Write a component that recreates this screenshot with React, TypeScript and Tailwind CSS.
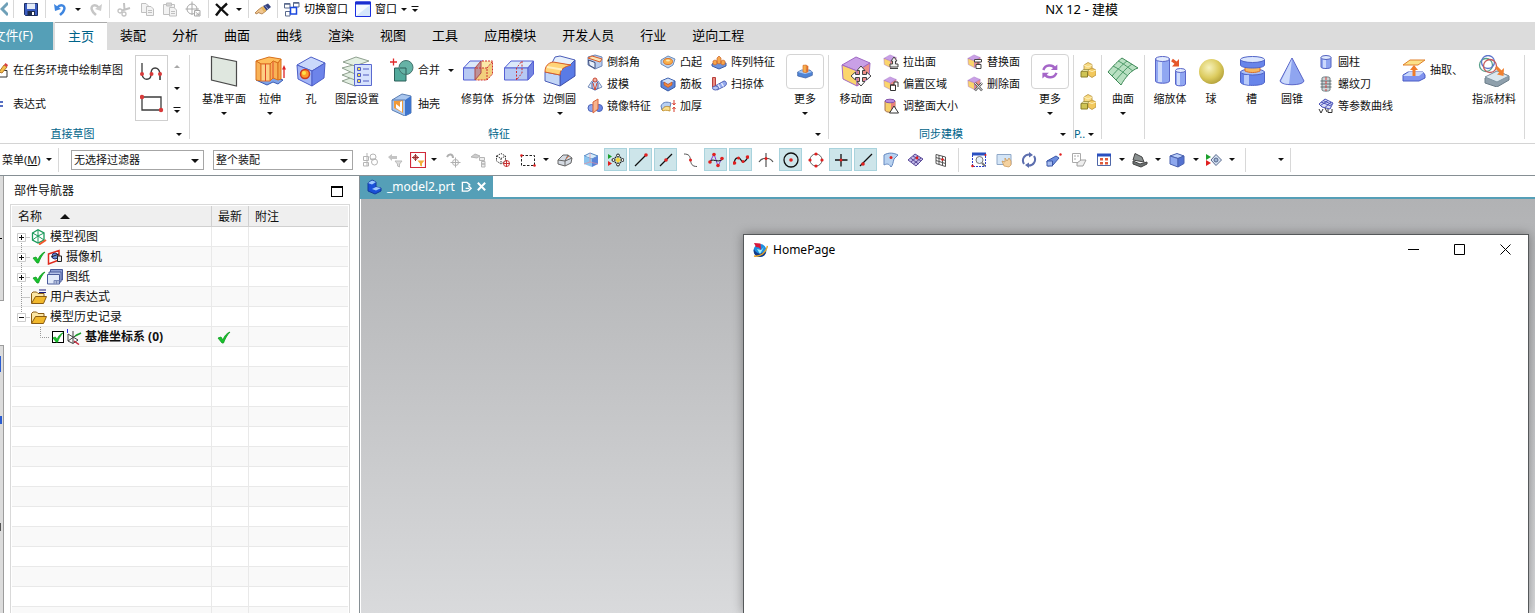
import type { ReactNode } from "react"
import clsx from "clsx"

/* ---------- small drawing helpers ---------- */

interface IcoProps {
    box?: number
    size?: number
    children: ReactNode
}

function Ico({ box = 16, size = box, children }: IcoProps) {
    return (
        <svg width={size} height={size} viewBox={`0 0 ${box} ${box}`} fill="none" className="shrink-0" aria-hidden="true">
            {children}
        </svg>
    )
}

function Caret({ className, up }: { className?: string; up?: boolean }) {
    return (
        <span className={clsx("flex shrink-0 items-center justify-center", className)}>
            <svg width="6" height="3" viewBox="0 0 6 3" aria-hidden="true">
                {up ? <path d="M3 0L6 3H0z" fill="#a8a8a8" /> : <path d="M0 0H6L3 3z" fill="#111" />}
            </svg>
        </span>
    )
}

function MoreCaret({ className }: { className?: string }) {
    return (
        <span className={clsx("flex shrink-0 items-center justify-center", className)}>
            <svg width="8" height="6" viewBox="0 0 8 6" aria-hidden="true">
                <path d="M0.500 0.500H7.500" stroke="#111" />
                <path d="M1 3H7L4 6z" fill="#111" />
            </svg>
        </span>
    )
}

function Sep({ className }: { className?: string }) {
    return <span className={clsx("w-px shrink-0 bg-[#d8d8d8]", className)} />
}

function Cube({ top, left, right, stroke }: { top: string; left: string; right: string; stroke: string }) {
    return (
        <g stroke={stroke} strokeWidth="1" strokeLinejoin="round">
            <path d="M2 10L16 2L30 8L17 16z" fill={top} />
            <path d="M2 10L17 16V31L3 24z" fill={left} />
            <path d="M17 16L30 8L29 23L17 31z" fill={right} />
        </g>
    )
}

const syncCube = <Cube top="#c9a0e6" left="#fbd56c" right="#ef8f86" stroke="#a06ac4" />
const tinySync = <g transform="scale(.44)">{syncCube}</g>

/* ---------- quick access icons ---------- */

const quick = {
    logo: <path d="M8 2L2 8L8 14" stroke="#6fa0b8" strokeWidth="3" />,
    save: (
        <>
            <path d="M1.500 2.500H14.500V14.500H2.500L1.500 13.500z" fill="#3a5cc0" stroke="#1d2f66" />
            <path d="M4 2.500H12V8H4z" fill="#e4ecf8" />
            <path d="M4.500 10H12V14.500H4.500z" fill="#1f2c4c" />
            <path d="M9 11H11V14H9z" fill="#fff" />
        </>
    ),
    undo: (
        <>
            <path d="M5 7C9 2 14 5 12 9C11 12 9 13 8 14" stroke="#3f86e0" strokeWidth="2.500" />
            <path d="M2 3L3 10L9 8z" fill="#3f86e0" />
        </>
    ),
    redo: (
        <>
            <path d="M11 7C7 2 2 5 4 9C5 12 7 13 8 14" stroke="#c6c6c6" strokeWidth="2.500" />
            <path d="M14 3L13 10L7 8z" fill="#cdcdcd" />
        </>
    ),
    cut: (
        <g stroke="#c3c3c3" strokeWidth="1.300">
            <path d="M8 2L8.500 9M14 7L6 9.500" strokeWidth="2" />
            <circle cx="4" cy="10" r="2" />
            <circle cx="8" cy="13" r="2" />
        </g>
    ),
    copy: (
        <g stroke="#c0c0c0" fill="#f3f3f3">
            <path d="M2.500 2.500H7L9.500 5V11.500H2.500z" />
            <path d="M7.500 5.500H12L14.500 8V14.500H7.500z" />
            <path d="M9 9.500H13M9 11.500H13" />
        </g>
    ),
    paste: (
        <g stroke="#c0c0c0" fill="#f3f3f3">
            <path d="M1.500 3.500H12.500V13.500H1.500z" />
            <path d="M4.500 2H9.500V5H4.500z" fill="#d5d5d5" />
            <path d="M7.500 6.500H12L14.500 9V15H7.500z" />
            <path d="M9 10.500H13M9 12.500H13" />
        </g>
    ),
    target: (
        <g stroke="#a8a8a8">
            <circle cx="7" cy="8" r="5" />
            <path d="M7 .5V14M.5 8H14" />
            <path d="M9.500 9.500H15V15H9.500z" fill="#fff" />
            <path d="M10.500 11L14 14M14 11.500V14H11" />
        </g>
    ),
    del: <path d="M2 3L14 14.500M13 2.500C9 6 5 10 2 14.500" stroke="#111" strokeWidth="2.400" />,
    brush: (
        <>
            <path d="M0 12L3 9L7 6L11 10L7 13L3 11.500L2 13z" fill="#f0c690" stroke="#a06a30" strokeWidth=".7" />
            <path d="M8 5L13 2.500L16 6L11 10z" fill="#35427c" />
            <path d="M6 7L8 5L11.500 9.500L9 11z" fill="#e6b45c" />
            <path d="M10 4.500L13 8" stroke="#8fa0dc" />
        </>
    ),
    windows: (
        <>
            <path d="M.5 2.500H6V7H.5zM9.500 1.500H15V6H9.500zM1.500 10.500H6V15H1.500z" fill="#fff" stroke="#5a6a8c" />
            <path d="M.5 3H6M9.500 2H15" stroke="#5a6a8c" strokeWidth="1.500" />
            <path d="M6.500 6.500H12.500V13H6.500z" fill="#fff" stroke="#1a48e0" strokeWidth="1.500" />
        </>
    ),
    window: (
        <>
            <path d="M.5 1H15.500V15.500H.5z" fill="#d5e7fb" stroke="#1a2ee0" />
            <path d="M1 4L15 4L1 15z" fill="#f5faff" />
            <path d="M.5 2H15.500" stroke="#1a2ed0" strokeWidth="3" />
        </>
    ),
}

function QuickButton({ icon, label, className }: { icon: ReactNode; label: string; className?: string }) {
    return (
        <button type="button" aria-label={label} className={clsx("shrink-0", className)}>
            <Ico>{icon}</Ico>
        </button>
    )
}

function QuickBar() {
    return (
        <header className="flex h-[22px] shrink-0 items-center bg-white pb-1 text-[11px] leading-4">
            <span className="w-2 overflow-hidden"><Ico>{quick.logo}</Ico></span>
            <Sep className="ml-[5px] h-[18px]" />
            <QuickButton icon={quick.save} label="保存" className="ml-[9px]" />
            <Sep className="ml-1.5 h-[18px]" />
            <QuickButton icon={quick.undo} label="撤消" className="ml-1.5" />
            <Caret className="w-5" />
            <QuickButton icon={quick.redo} label="重做" />
            <Sep className="ml-[5px] h-[18px]" />
            <div className="ml-1.5 flex gap-[7px]">
                <QuickButton icon={quick.cut} label="剪切" />
                <QuickButton icon={quick.copy} label="复制" />
                <QuickButton icon={quick.paste} label="粘贴" />
                <QuickButton icon={quick.target} label="重复命令" />
            </div>
            <Sep className="ml-[7px] h-[18px]" />
            <QuickButton icon={quick.del} label="删除" className="ml-[5px]" />
            <Caret className="w-[18px]" />
            <Sep className="h-[18px]" />
            <QuickButton icon={quick.brush} label="格式刷" className="ml-1.5" />
            <Sep className="ml-1.5 h-[18px]" />
            <button type="button" className="ml-1.5 flex items-center gap-1">
                <Ico>{quick.windows}</Ico>切换窗口
            </button>
            <button type="button" className="ml-[7px] flex items-center gap-1">
                <Ico>{quick.window}</Ico>窗口
                <Caret className="w-1.5" />
            </button>
            <MoreCaret className="ml-0.5 w-3" />
            <h1 className="ml-auto mr-[417px] text-[13px]">NX 12 - 建模</h1>
        </header>
    )
}

/* ---------- ribbon tabs ---------- */

const tabs = ["主页", "装配", "分析", "曲面", "曲线", "渲染", "视图", "工具", "应用模块", "开发人员", "行业", "逆向工程"]

function TabRow() {
    return (
        <nav className="flex h-7 shrink-0 bg-[#dcdcdc] text-[13px] leading-5">
            <button type="button" className="flex w-[53px] shrink-0 items-center justify-end overflow-hidden whitespace-nowrap bg-[#559fb7] pb-0.5 pr-5 text-white">
                文件(F)
            </button>
            {tabs.map((tab, i) => (
                <button
                    type="button"
                    key={tab}
                    className={clsx(
                        "shrink-0 px-[13px] pb-0.5",
                        i === 0 && "ml-0.5 border-t border-[#aaa] bg-white text-[#00648a]"
                    )}
                >
                    {tab}
                </button>
            ))}
        </nav>
    )
}

/* ---------- ribbon icons ---------- */

const big = {
    plane: <path d="M3.500 1.500L28.500 6.500V31L3.500 25z" fill="#dfe7df" stroke="#4a4a4a" strokeWidth="1.200" />,
    extrude: (
        <>
            <path d="M2 25L16 20L29 25L24 29L19 27L13 30z" fill="#7ea2e6" stroke="#3c5cb4" />
            <path d="M2 6L15 2L27 4L24 8L19 6L16 9L7 9z" fill="#ffbe5c" stroke="#d8701c" />
            <path d="M2 6L7 9V26L2 25zM16 9L19 6L24 8V25L19 23L16 26z" fill="#f8b256" stroke="#d8701c" />
            <path d="M7 9L16 9V26L7 26z" fill="#fdd083" stroke="#e0702c" />
            <path d="M24 8L27 4V24L24 25z" fill="#f6a848" stroke="#d8701c" />
            <path d="M11.500 9V26M19 7V23" stroke="#e04a2c" />
            <path d="M30 23V13" stroke="#d22" strokeWidth="1.300" />
            <path d="M28 14.500L30 10L32 14.500z" fill="#d22" />
        </>
    ),
    hole: (
        <>
            <Cube top="#c9d8fb" left="#a3b5f6" right="#6d84ea" stroke="#4d5fc8" />
            <circle cx="10" cy="19" r="4.500" fill="#ff9a28" stroke="#cc3a22" strokeWidth="1.500" />
            <circle cx="9" cy="18" r="2" fill="#ffe04a" />
        </>
    ),
    layers: (
        <>
            <g fill="#e3efe2" stroke="#8fa08f">
                <path d="M1 26L12 22L28 27L14 31z" />
                <path d="M1 20L12 16L28 20L14 25z" />
                <path d="M1 13L12 10L28 13L14 19z" />
                <path d="M2 7L15 2L28 6L14 11z" />
            </g>
            <path d="M13.500 9.500H30.500V30.500H13.500z" fill="#d6e2fd" stroke="#5a6ad0" />
            <g stroke="#505ac0">
                <path d="M16.500 12.500h3v3h-3zM16.500 18.500h3v3h-3zM16.500 24.500h3v3h-3z" fill="#f5dc50" />
                <path d="M22 14H28M22 20H28M22 26H28" />
            </g>
        </>
    ),
    unite: (
        <>
            <path d="M4.500 10H16V23H4.500z" fill="#52aa9c" stroke="#2b5f58" />
            <circle cx="16" cy="9.500" r="7" fill="#66b3a6" stroke="#44736d" />
            <path d="M10 10H16V16" stroke="#2b5f58" />
            <path d="M0 4H7M3.500 .5V7.500" stroke="#e02a2a" strokeWidth="1.300" />
        </>
    ),
    shell: (
        <>
            <path d="M2 8L12 2L21 4L21 21L15 24L2 18z" fill="#a9c6ee" stroke="#5c7fb4" />
            <path d="M15 8L21 4V21L15 24z" fill="#3e74cc" />
            <path d="M4 9L13 8V21L4 16z" fill="#f19a38" />
            <path d="M6 16V12L10 15V10L12 9V20z" fill="#fff" />
            <path d="M2 8L15 8" stroke="#5c7fb4" />
        </>
    ),
    trim: (
        <>
            <g stroke="#5560d4">
                <path d="M1.500 13L8 6H21L16 13z" fill="#dbe9fa" />
                <path d="M1.500 13H14V25H1.500z" fill="#b7c9f3" />
            </g>
            <path d="M14 12L20 6H30.500L25 13H14z" fill="#fbe9a8" />
            <path d="M14 13H25V25H14zM25 13L30.500 7V19L25 25z" fill="#f2cf7c" />
            <path d="M13 25V13L19 6V18z" fill="#bd9299" stroke="#b04848" />
            <path d="M20 6H30.500V19L25 25H14M25 25V13L30 7M14 13H25" stroke="#d03030" strokeDasharray="2 1" />
        </>
    ),
    split: (
        <>
            <g stroke="#5560d4">
                <path d="M1.500 13L8 6H30.500L25 13z" fill="#dbe9fa" />
                <path d="M1.500 13H25V25H1.500z" fill="#b7c9f3" />
                <path d="M25 13L30.500 6V19L25 25z" fill="#7486e2" />
            </g>
            <path d="M13.500 25V13L19 6V18z" stroke="#d03030" strokeDasharray="2 1.500" />
        </>
    ),
    blend: (
        <>
            <path d="M16 19C16 14 22 12 31 5V21L16 31z" fill="#5a7be6" stroke="#3c4ca8" />
            <path d="M1 17L16 20V31L1 26z" fill="#c3d6f6" stroke="#4a5cb8" />
            <path d="M11 2L16 1L31 5L26 10L8 8z" fill="#e7f0fb" stroke="#4a5cb8" />
            <path d="M1 17C1 11 4 8 9 7L27 10C20 12 16 14 16 20z" fill="#ffd477" stroke="#d85c28" />
            <path d="M3 12L18 14.500" stroke="#fff0c0" strokeWidth="2" />
        </>
    ),
    more: (
        <>
            <path d="M1 12L7 9H19L23 12V17L13 21L1 18z" fill="#4f84d6" stroke="#33569c" />
            <path d="M1 12L12 15L23 12L17 9.500H7z" fill="#a8c8f2" />
            <path d="M9 2L14 1.500V13L9 12z" fill="#f6b050" stroke="#d86a20" />
            <path d="M14 1.500L17 3V12L14 13z" fill="#e0702a" />
        </>
    ),
    moveFace: (
        <>
            {syncCube}
            <path
                d="M21 11L25 15.500H22.500V19.500H26.500V17L31 21L26.500 25V22.500H22.500V26.500H25L21 31L17 26.500H19.500V22.500H15.500V25L11 21L15.500 17V19.500H19.500V15.500H17z"
                fill="#fff"
                stroke="#444"
            />
        </>
    ),
    cycle: (
        <g transform="translate(-5 -5) scale(1.400)">
            <path d="M5 10C7 4 15 4 17 8M19 13C17 19 9 19 7 15" stroke="#a566c8" strokeWidth="2.600" />
            <path d="M13 10H20V4zM11 13H4V19z" fill="#a566c8" />
        </g>
    ),
    surface: (
        <>
            <path d="M1 17C7 10 11 6 15 3L31 13C24 15 18 23 14 30z" fill="#b9e0c2" stroke="#3f8a58" />
            <path d="M6 11C11 13 18 19 21 21M11 6C16 8 23 14 26 16M5 21C11 14 15 10 20 6M9 25C15 18 19 13 25 9" stroke="#4c9a68" />
        </>
    ),
    scale: (
        <>
            <g stroke="#5a66c8">
                <path d="M1.500 4V26C1.500 29 15.500 29 15.500 26V4z" fill="#90a7f2" />
                <path d="M4 5V27H8V6z" fill="#cfdcfc" stroke="none" />
                <ellipse cx="8.500" cy="4" rx="7" ry="2.500" fill="#e2ebfd" />
                <path d="M21.500 16V29C21.500 31.500 31.500 31.500 31.500 29V16z" fill="#90a7f2" />
                <path d="M23 17V30H26V17z" fill="#cfdcfc" stroke="none" />
                <ellipse cx="26.500" cy="15.500" rx="5" ry="2" fill="#e2ebfd" />
            </g>
            <path d="M18 5L22 8" stroke="#e5572a" strokeWidth="3" />
            <path d="M25 4V11.500H18z" fill="#e5572a" />
        </>
    ),
    cone: (
        <>
            <path d="M16 3L28 26C27 31 5 31 4 26z" fill="#8fa5f0" stroke="#5a66c8" />
            <path d="M16 4L13 29C9 29 6 28 5 26z" fill="#ccdafc" />
        </>
    ),
    groove: (
        <>
            <g stroke="#4f63c8">
                <path d="M4.500 17V27C4.500 31.500 28.500 31.500 28.500 27V17z" fill="#6885ea" />
                <ellipse cx="16.500" cy="17" rx="12" ry="3" fill="#a9bff7" />
                <path d="M9 10H24V16C20 18 13 18 9 16z" fill="#f7b860" stroke="#d8702c" />
                <path d="M4.500 5V10C4.500 14 28.500 14 28.500 10V5z" fill="#6885ea" />
                <ellipse cx="16.500" cy="4.500" rx="12" ry="3" fill="#dbe6fd" />
            </g>
            <path d="M8 20V29L13 30V20z" fill="#b9cbfa" />
        </>
    ),
    material: (
        <>
            <path d="M7 23L19 16L31 21V25L19 32L7 28z" fill="#8fa0ac" stroke="#6a7c88" />
            <path d="M7 22L19 16L31 21L19 27z" fill="#dbe7ee" stroke="#8095a2" />
            <circle cx="8" cy="10" r="6.500" stroke="#58a08a" strokeWidth="1.300" />
            <circle cx="10" cy="7" r="6.500" stroke="#5c74cc" strokeWidth="1.300" />
            <circle cx="12" cy="11" r="6.500" stroke="#c65a5a" strokeWidth="1.300" />
            <path d="M18 12L23 17" stroke="#f08030" strokeWidth="3" />
            <path d="M19 19.500L26 13L25.500 21z" fill="#f08030" />
        </>
    ),
    extract: (
        <>
            <path d="M1 17L6 14H21L23 17V20L17 23H1z" fill="#7f92ee" stroke="#4a5cc4" />
            <path d="M1 18L7 14H22L17 18z" fill="#cad9fb" />
            <path d="M1 7L8 2H23L16 7z" fill="#fbe188" stroke="#e0802c" />
            <path d="M12 18V11" stroke="#f07c28" strokeWidth="3" />
            <path d="M8 12L12 7L16 12z" fill="#f07c28" />
        </>
    ),
}

const ball = (
    <>
        <defs>
            <radialGradient id="ball" cx=".4" cy=".35" r=".7">
                <stop offset="0" stopColor="#f6f2bc" />
                <stop offset=".6" stopColor="#dccb5e" />
                <stop offset="1" stopColor="#b09e38" />
            </radialGradient>
        </defs>
        <circle cx="16.500" cy="16.500" r="12.500" fill="url(#ball)" />
    </>
)

const small = {
    chamfer: (
        <>
            <path d="M1 3L8 1L15 3V12L8 15L1 11z" fill="#b7cbed" stroke="#7088b8" />
            <path d="M1 4L13 8L15 5L5 2z" fill="#fbe3b4" stroke="#d85c28" />
            <path d="M1.500 6L8 8.500V14.500L2 11z" fill="#e8f0fb" stroke="#3c4c7c" />
        </>
    ),
    draft: (
        <>
            <path d="M1 11L5 5H11L15 11L8 14z" fill="#e6eef8" stroke="#7088b8" />
            <path d="M5 12V7L8 4L11 7V12L8 14z" fill="#c8d8f4" stroke="#4a62a8" />
            <path d="M8 14L6 7M8 14L10 7" stroke="#d84a30" />
            <circle cx="8" cy="4" r="2" fill="#f1b2a2" stroke="#c84a38" />
        </>
    ),
    mirror: (
        <>
            <circle cx="4.500" cy="10" r="3.500" fill="#8ea6ee" stroke="#4a62b8" />
            <circle cx="12" cy="10" r="3.500" fill="#6a86e6" stroke="#4a62b8" />
            <path d="M6 4L11 1V11L6 15z" fill="#f7b48e" stroke="#d8643c" />
        </>
    ),
    emboss: (
        <>
            <path d="M1 6L8 2L15 5L13 11L8 14L1 10z" fill="#bcd3ee" stroke="#6f8fbc" />
            <ellipse cx="8" cy="7.500" rx="4.500" ry="3" fill="#f8b04c" stroke="#d8742c" />
            <ellipse cx="8" cy="6.500" rx="2" ry="1" fill="#fde9b0" />
        </>
    ),
    rib: (
        <>
            <path d="M1 5L8 2L15 5V11L8 15L1 11z" fill="#5e86d8" stroke="#365aa8" />
            <path d="M2 5L8 2.500L14 5L8 8z" fill="#cfe0f8" />
            <path d="M4 6L8 8.500L12 6V9L8 11.500L4 9z" fill="#f28a3c" stroke="#c8501c" strokeWidth=".6" />
        </>
    ),
    thicken: (
        <>
            <path d="M1 8C3 3 8 4 11 5L10 9C7 8 4 8 2 12z" fill="#b8d0f2" stroke="#5c7cb8" />
            <path d="M2 12C4 8 7 8 10 9V13C7 12 4 12 3 13z" fill="#fbe08c" stroke="#c89a3c" />
            <path d="M14 2V6M14 14V10M12.500 5L14 7L15.500 5M12.500 11L14 9L15.500 11" stroke="#d83a2c" />
        </>
    ),
    pattern: (
        <>
            <path d="M1 10L5 8L15 9V12L8 15L1 12z" fill="#6c93dc" stroke="#3c5ca4" />
            <path d="M2 7L4 6L6 7V10L4 11L2 10zM6 4L8 2L10 4V9L8 10L6 9zM10 7L12 6L14 7V10L12 11L10 10z" fill="#f6a64c" stroke="#c8642c" strokeWidth=".7" />
        </>
    ),
    sweep: (
        <>
            <path d="M4 10L13 5C16 5 16 9 14 10L6 14z" fill="#93a9ee" stroke="#5262b4" />
            <path d="M7 8.500L9 12M10.500 7L12.500 10.500" stroke="#e6ecfc" strokeWidth="1.500" />
            <path d="M1.500 1.500H4.500V11H1.500z" fill="#e88a80" stroke="#b8403c" />
            <ellipse cx="4.500" cy="12" rx="3" ry="2" fill="#b8c8f4" stroke="#5262b4" />
        </>
    ),
    pull: (
        <>
            {tinySync}
            <path d="M11 3L14 7H12.500V10H15V13H7V10H9.500V7H8zM7 14.500H15" fill="#f0f0f0" stroke="#444" />
        </>
    ),
    offset: (
        <>
            {tinySync}
            <path d="M7.500 9H11V6H15V11M7.500 9V14.500H12.500V9z" fill="#fff" stroke="#333" />
        </>
    ),
    resize: (
        <>
            <path d="M2 3V12C2 15 12 15 12 12V3z" fill="#f6d068" stroke="#a8704c" />
            <path d="M8 4H12V13L8 14z" fill="#e88078" />
            <ellipse cx="7" cy="3" rx="5" ry="1.800" fill="#b88ade" stroke="#8656ac" />
            <path d="M11 8L15.500 15H6.500z" fill="#fff" stroke="#333" />
        </>
    ),
    replace: (
        <>
            {tinySync}
            <path d="M7.500 5.500H14.500V8H7.500zM9 10.500H14V14.500H9z" fill="#fff" stroke="#444" />
            <path d="M11 8V10" stroke="#444" />
        </>
    ),
    remove: (
        <>
            {tinySync}
            <path d="M8 7L15 14.500M15 7L8 14.500" stroke="#555" strokeWidth="2.500" />
            <path d="M8 7L15 14.500M15 7L8 14.500" stroke="#eee" />
        </>
    ),
    cylinder: (
        <>
            <path d="M3 3.500V13C3 15 13 15 13 13V3.500z" fill="#8ea4f0" stroke="#5262c0" />
            <path d="M5 4V13.500L8 14V4z" fill="#ccd9fc" />
            <ellipse cx="8" cy="3.500" rx="5" ry="2" fill="#e0e9fd" stroke="#5262c0" />
        </>
    ),
    thread: (
        <>
            <path d="M4 2C4 .5 12 .5 12 2V14C12 15.500 4 15.500 4 14z" fill="#ccd6d8" stroke="#6c7c80" />
            <path d="M2.500 5H13.500M2.500 8H13.500M2.500 11H13.500" stroke="#5c6c70" />
            <path d="M8 1V15" stroke="#d84040" strokeDasharray="3 1" />
        </>
    ),
    isoparam: (
        <>
            <path d="M1 6L7 1L15 5L12 11L4 9z" fill="#d8dcf6" stroke="#4a52b8" />
            <path d="M3 4L13 8M5 2.500L14 6.500M2.500 7.500L10 2.500M7 9.500L13 4" stroke="#4a52b8" />
            <path d="M1 11L3 15L5 11M10 11V14.500H14V11" stroke="#333" />
            <path d="M7 10L9 14" stroke="#333" />
        </>
    ),
    boxes: (
        <>
            <path d="M4 3L8 .5L12 2.500V8H4z" fill="#f8da80" stroke="#b8923c" strokeWidth=".8" />
            <path d="M8 8L12 6L16 8V13L12 15.500L8 13z" fill="#f2c85c" stroke="#b8923c" strokeWidth=".8" />
            <path d="M8 8L12 9.500L16 8M4 3L8 5L12 3" stroke="#fdf0bc" />
            <path d="M1 9.500H7.500V15H1z" fill="#cfc455" stroke="#8a7f28" />
            <path d="M1 9.500L3.500 7.500H9L7.500 9.500z" fill="#e8e0a0" stroke="#8a7f28" strokeWidth=".6" />
        </>
    ),
    pencil: (
        <>
            <path d="M1 8.500H15V15H1z" stroke="#333" />
            <path d="M7 10L12 3L15 5L10 11z" fill="#f4c04c" stroke="#b8782c" />
            <path d="M12 3L13.500 1L16 3L15 5z" fill="#d84040" />
        </>
    ),
    equal: <path d="M4 6H11M4 10H11" stroke="#1f3fae" strokeWidth="1.300" />,
}

const profileCurve = (
    <>
        <path d="M2 3V14C3 21 11 21 11 14C11 6 19 6 20 14V20" stroke="#3c3c3c" strokeWidth="1.300" />
        <path d="M20 12V20" stroke="#3c3c3c" />
        <g fill="#d83a3a">
            <circle cx="2" cy="14" r="2" />
            <circle cx="11.500" cy="14" r="2" />
            <circle cx="20" cy="14" r="2" />
        </g>
    </>
)

const rectangleCurve = (
    <>
        <path d="M2 5H21V18H2z" stroke="#3c3c3c" strokeWidth="1.300" />
        <circle cx="2" cy="5" r="2.200" fill="#d83a3a" />
        <circle cx="21" cy="18" r="2.200" fill="#d83a3a" />
    </>
)

/* ---------- ribbon building blocks ---------- */

interface BigButtonProps {
    icon: ReactNode
    label: string
    className: string
    menu?: boolean
}

function BigButton({ icon, label, className, menu }: BigButtonProps) {
    return (
        <button type="button" className={clsx("flex shrink-0 flex-col items-center whitespace-nowrap pt-1", className)}>
            <Ico box={32}>{icon}</Ico>
            <span className="mt-0.5 leading-5">{label}</span>
            {menu && <Caret className="h-2" />}
        </button>
    )
}

function MoreButton({ icon }: { icon: ReactNode }) {
    return (
        <button type="button" className="flex w-[38px] shrink-0 flex-col items-center pt-[3px]">
            <span className="flex h-[35px] w-full items-center justify-center rounded-sm border border-[#d4d4d4]">
                <Ico box={24} size={16}>{icon}</Ico>
            </span>
            <span className="leading-5">更多</span>
            <Caret className="h-2" />
        </button>
    )
}

function SmallButton({ icon, label }: { icon: ReactNode; label: string }) {
    return (
        <button type="button" className="flex h-[22px] items-center gap-1 whitespace-nowrap">
            <Ico>{icon}</Ico>{label}
        </button>
    )
}

interface GroupProps {
    title?: string
    menu?: boolean
    className?: string
    children: ReactNode
}

function Group({ title, menu, className, children }: GroupProps) {
    return (
        <section className="flex shrink-0">
            <div className="flex flex-col">
                <div className={clsx("flex h-[74px]", className)}>{children}</div>
                <div className="flex h-[18px] items-center text-[#00648a]">
                    <span className="w-0 flex-1 whitespace-nowrap text-center leading-4">{title}</span>
                    {menu && <Caret className="w-5" />}
                </div>
            </div>
            <Sep className="my-1" />
        </section>
    )
}

function Ribbon() {
    return (
        <div className="flex h-[94px] shrink-0 overflow-hidden border-b border-[#d4d4d4] bg-white pt-px text-[11px] text-[#111]">
            <div className="-ml-6 flex">
                <Group title="直接草图" menu className="pl-4">
                    <div className="flex w-[143px] flex-col pt-0.5">
                        <button type="button" className="flex h-[34px] items-center gap-[5px] whitespace-nowrap">
                            <Ico>{small.pencil}</Ico>在任务环境中绘制草图
                        </button>
                        <button type="button" className="flex h-[34px] items-center gap-[5px]">
                            <Ico>{small.equal}</Ico>表达式
                        </button>
                    </div>
                    <div className="mt-1 flex h-[66px] w-[33px] flex-col items-center justify-around border border-[#cfcfcf]">
                        <button type="button" aria-label="轮廓"><Ico box={24}>{profileCurve}</Ico></button>
                        <button type="button" aria-label="矩形"><Ico box={24}>{rectangleCurve}</Ico></button>
                    </div>
                    <div className="mr-1 flex w-[17px] flex-col pt-1">
                        <Caret up className="h-[22px]" />
                        <Caret className="h-[22px]" />
                        <MoreCaret className="h-[22px]" />
                    </div>
                </Group>
            </div>

            <Group title="特征" menu className="pl-2 pr-1">
                <BigButton icon={big.plane} label="基准平面" className="w-[52px]" menu />
                <BigButton icon={big.extrude} label="拉伸" className="w-10" menu />
                <BigButton icon={big.hole} label="孔" className="w-[42px]" />
                <BigButton icon={big.layers} label="图层设置" className="w-[50px]" />
                <div className="ml-2 flex w-[67px] flex-col pt-0.5">
                    <button type="button" className="flex h-[34px] items-center gap-1">
                        <Ico box={24}>{big.unite}</Ico>合并
                        <Caret className="ml-1 w-1.5" />
                    </button>
                    <button type="button" className="flex h-[34px] items-center gap-1">
                        <Ico box={24}>{big.shell}</Ico>抽壳
                    </button>
                </div>
                <BigButton icon={big.trim} label="修剪体" className="w-[41px]" />
                <BigButton icon={big.split} label="拆分体" className="w-[41px]" />
                <BigButton icon={big.blend} label="边倒圆" className="w-[41px]" menu />
                <div className="ml-[7px] grid h-[66px] grid-cols-[73px_51px_75px] grid-rows-3">
                    <SmallButton icon={small.chamfer} label="倒斜角" />
                    <SmallButton icon={small.emboss} label="凸起" />
                    <SmallButton icon={small.pattern} label="阵列特征" />
                    <SmallButton icon={small.draft} label="拔模" />
                    <SmallButton icon={small.rib} label="筋板" />
                    <SmallButton icon={small.sweep} label="扫掠体" />
                    <SmallButton icon={small.mirror} label="镜像特征" />
                    <SmallButton icon={small.thicken} label="加厚" />
                </div>
                <MoreButton icon={big.more} />
            </Group>

            <Group title="同步建模" menu className="pr-1">
                <BigButton icon={big.moveFace} label="移动面" className="w-[54px]" />
                <div className="grid h-[66px] grid-cols-[84px_64px] grid-rows-3">
                    <SmallButton icon={small.pull} label="拉出面" />
                    <SmallButton icon={small.replace} label="替换面" />
                    <SmallButton icon={small.offset} label="偏置区域" />
                    <SmallButton icon={small.remove} label="删除面" />
                    <SmallButton icon={small.resize} label="调整面大小" />
                </div>
                <MoreButton icon={big.cycle} />
            </Group>

            <Group title="P.." menu className="w-[27px] flex-col items-center pt-0.5">
                <button type="button" aria-label="装配组件" className="flex h-[34px] items-center"><Ico>{small.boxes}</Ico></button>
                <button type="button" aria-label="组件阵列" className="flex h-[30px] items-center"><Ico>{small.boxes}</Ico></button>
            </Group>

            <Group>
                <BigButton icon={big.surface} label="曲面" className="w-[42px]" menu />
            </Group>

            <Group>
                <BigButton icon={big.scale} label="缩放体" className="w-[50px]" />
                <BigButton icon={ball} label="球" className="w-8" />
                <BigButton icon={big.groove} label="槽" className="w-[49px]" />
                <BigButton icon={big.cone} label="圆锥" className="w-8" />
                <div className="ml-2.5 flex w-[84px] flex-col">
                    <SmallButton icon={small.cylinder} label="圆柱" />
                    <SmallButton icon={small.thread} label="螺纹刀" />
                    <SmallButton icon={small.isoparam} label="等参数曲线" />
                </div>
                <button type="button" className="mt-0.5 flex h-[34px] w-[62px] items-center gap-1 whitespace-nowrap">
                    <Ico box={24}>{big.extract}</Ico>抽取、
                </button>
                <BigButton icon={big.material} label="指派材料" className="w-[60px]" />
            </Group>
        </div>
    )
}

/* ---------- selection bar ---------- */

const dot = (cx: number, cy: number, r = 1.8) => <circle cx={cx} cy={cy} r={r} fill="#e01f1f" />

interface Tool {
    label: string
    width: string
    icon?: ReactNode
    on?: boolean
    caret?: boolean
}

const caretCell: Tool = { label: "", width: "w-3", caret: true }

const snapTools: Tool[] = [
    {
        label: "常规选择", width: "w-[26px]",
        icon: <g stroke="#b5b5b5"><path d="M1.500 4.500H6.500V8.500H1.500zM1.500 10.500H6.500V14H1.500zM5 1V14M8 7H13" /><circle cx="11" cy="5" r="3" /><circle cx="12.500" cy="10" r="3" /></g>,
    },
    {
        label: "返回过滤", width: "w-6",
        icon: <><path d="M1 5L5 2V4H10V7H5V9z" fill="#c4c4c4" /><path d="M8 9H15L12.500 12V15L10.500 14V12z" fill="#ddd" stroke="#bbb" /></>,
    },
    {
        label: "重置过滤器", width: "w-[21px]",
        icon: <><path d="M.5 .5H15.500V15.500H.5z" stroke="#d02a3a" strokeWidth="1.200" /><circle cx="5.500" cy="5.500" r="2" stroke="#a03030" /><path d="M5.500 2V9M2 5.500H9" stroke="#a03030" /><path d="M7.500 8.500H14.500L12 11.500V14.500L10 13.500V11.500z" fill="#f3b03c" /></>,
    },
    caretCell,
    {
        label: "恢复定向", width: "w-[26px]",
        icon: <g stroke="#b0b0b0"><path d="M2 5C4 1 8 2 8 6" strokeWidth="2" /><circle cx="10.500" cy="10.500" r="3" /><path d="M10.500 5.500V15.500M5.500 10.500H15.500" /></g>,
    },
    {
        label: "选择树", width: "w-6",
        icon: <g stroke="#b5b5b5"><path d="M1 5L5 2L10 4L7 6z" fill="#ccc" /><path d="M9.500 5.500H14.500V8.500H9.500zM11.500 9.500H15V12H11.500zM11.500 12H15V15H11.500z" fill="#eee" /></g>,
    },
    {
        label: "突出显示", width: "w-[26px]",
        icon: <><path d="M1.500 4L6 1.500L10.500 4V9L6 12L1.500 9zM1.500 4L6 6.500L10.500 4M6 6.500V12" stroke="#333" strokeDasharray="1.500 1" /><circle cx="11.500" cy="11.500" r="3" stroke="#c83232" /><path d="M11.500 8V15M8 11.500H15" stroke="#c83232" /></>,
    },
    {
        label: "矩形选择", width: "w-6",
        icon: <><path d="M1.500 3.500H14.500V13.500H1.500z" stroke="#222" strokeDasharray="2.500 1.500" />{dot(1.5, 3.5, 1.3)}{dot(14.5, 13.5, 1.3)}</>,
    },
    caretCell,
    {
        label: "高亮隐藏边", width: "w-[26px]",
        icon: <><path d="M1 8L6 3H11L15 6L14 11L8 14L1 12z" fill="#d5dbe3" stroke="#666" /><path d="M1 8L8 9L11 3M8 9V14M8 9L15 6" stroke="#666" /><path d="M9 7L12 4" stroke="#e07a50" /></>,
    },
    {
        label: "着色选择", width: "w-[25px]",
        icon: <><path d="M1 4L7 1L15 4L9 7z" fill="#d8ecfa" stroke="#5588c4" /><path d="M1 4L9 7V15L1 12z" fill="#8cc4ee" /><path d="M9 7L15 4V12L9 15z" fill="#5c84d8" /><path d="M7 1V10L1 12M7 10L15 12" stroke="#e090a0" strokeWidth=".7" /></>,
    },
    {
        label: "启用捕捉点", width: "w-[25px]", on: true,
        icon: <><path d="M0 2L4 4.500L0 7z" fill="#1ca02c" /><path d="M0 9L4 11.500L0 14z" fill="#e02020" /><path d="M10 5L13 8L10 11L7 8z" fill="#f4d83c" /><g fill="#eee" stroke="#222"><circle cx="10" cy="3.500" r="1.500" /><circle cx="10" cy="12.500" r="1.500" /><circle cx="5.500" cy="8" r="1.500" /><circle cx="14.500" cy="8" r="1.500" /></g><path d="M7 5L8 6M13 5L12 6M7 11L8 10M13 11L12 10" stroke="#222" strokeWidth="1.500" /></>,
    },
    { label: "终点", width: "w-[25px]", on: true, icon: <><path d="M2 14L13 3" stroke="#111" strokeWidth="1.200" />{dot(13, 3)}</> },
    { label: "中点", width: "w-[25px]", on: true, icon: <><path d="M2 14L14 2" stroke="#111" strokeWidth="1.200" />{dot(8, 8)}</> },
    { label: "控制点", width: "w-[25px]", icon: <><path d="M1 2C6 2 7 4 7.500 8C8 12 9 14.500 14 14.500" stroke="#555" />{dot(7.5, 8, 1.5)}</> },
    { label: "极点", width: "w-[25px]", on: true, icon: <><path d="M2 10L6 2L10 14L14 6" stroke="#8a3ad0" /><path d="M1 10C5 5 9 12 15 7" stroke="#111" />{dot(2, 10)}{dot(6, 2.5)}{dot(10, 13.5)}{dot(14, 6.5)}</> },
    { label: "定义点", width: "w-[25px]", on: true, icon: <><path d="M1 12C2 3 7 6 8 8C10 12 13 9 15 5" stroke="#111" strokeWidth="1.200" />{dot(1.5, 11)}{dot(5.5, 6, 1.5)}{dot(10, 9.5, 1.5)}{dot(14.5, 5)}</> },
    { label: "交点", width: "w-[25px]", icon: <><path d="M8 1V15M1 10C4 5 12 5 15 10" stroke="#555" strokeWidth="1.200" />{dot(8, 6.5, 1.5)}</> },
    { label: "圆心", width: "w-[25px]", on: true, icon: <><circle cx="8" cy="8" r="7" stroke="#111" strokeWidth="1.300" />{dot(8, 8)}</> },
    { label: "象限点", width: "w-[25px]", icon: <><circle cx="8" cy="8" r="6" stroke="#666" />{dot(8, 2, 1.6)}{dot(8, 14, 1.6)}{dot(2, 8, 1.6)}{dot(14, 8, 1.6)}</> },
    { label: "现有点", width: "w-[25px]", on: true, icon: <><path d="M8 2V14.500M2 8H14.500" stroke="#111" strokeWidth="1.300" />{dot(8, 8, 1.5)}</> },
    { label: "曲线上的点", width: "w-[25px]", on: true, icon: <><path d="M2 14L14 2" stroke="#111" strokeWidth="1.200" />{dot(5, 12)}</> },
    { label: "面上的点", width: "w-[25px]", icon: <><path d="M1 3C6 0 11 1 15 3L11 7C10 10 10 13 8 15C6 11 3 12 1 13z" fill="#b8d2f0" stroke="#6488c0" />{dot(8, 5.5, 1.5)}</> },
    { label: "有界栅格点", width: "w-[25px]", icon: <><path d="M0 8L7 2L15 7L8 14z" fill="#c0b8e6" stroke="#5a4a98" /><path d="M2.500 6L10.500 12M5 4L13 9M3 10L10 4M5.500 12L13 6" stroke="#5a4a98" />{dot(9, 6, 1.4)}</> },
    { label: "栅格点", width: "w-[25px]", icon: <><path d="M3 2.500L12.500 5V14.500L3 11.500zM6 3V12.500M9.500 4V13.500M3 5.500L12.500 8.500M3 8.500L12.500 11.500" stroke="#555" />{dot(9.5, 7.5, 1.3)}</> },
]

const viewTools: Tool[] = [
    { label: "缩放", width: "w-[25px]", icon: <><path d="M1.500 3V14.500H14.500V3" stroke="#2a3cc8" strokeDasharray="2 1" /><path d="M1 2H15" stroke="#2a50c0" strokeWidth="3" /><circle cx="8.500" cy="8" r="3.500" fill="#e8f2fa" stroke="#777" /><path d="M11 11L14 14" stroke="#777" strokeWidth="2" />{dot(1.5, 14, 1.3)}{dot(14.5, 3, 1)}</> },
    { label: "平移", width: "w-[25px]", icon: <><path d="M1 2.500H15V12.500H1z" fill="#d4e5f6" stroke="#8fa8c8" /><path d="M8 14L6 9L9 10V6L11 9L13 6L15 9V13L13 15z" fill="#f4d2a0" stroke="#c89450" strokeWidth=".7" /></> },
    { label: "旋转", width: "w-[25px]", icon: <><path d="M3 12C0 7 4 2 9 2.500M13 4C16 9 12 14 7 13.500" stroke="#5c6eae" strokeWidth="2" /><path d="M8 0L12 3L8 5.500zM8 16L4 13L8 10.500z" fill="#5c6eae" /></> },
    { label: "定向到选择", width: "w-[25px]", icon: <><path d="M1 9L10 4L13 6L7 13L2 14z" fill="#6d8ede" stroke="#3c58a8" /><path d="M1 9H6.500V14H1z" fill="#a8bef0" stroke="#3c58a8" />{dot(14.5, 2.5, 1.2)}</> },
    { label: "编辑截面", width: "w-[25px]", icon: <><path d="M1.500 1.500H9.500V10.500H1.500zM3 4H5M6 4H8M3 7H5" stroke="#aaa" /><path d="M6 11L10 8H15L12 14H6z" fill="#eee" stroke="#a0a0a0" /></> },
    { label: "适合窗口", width: "w-[25px]", icon: <><path d="M1.500 2.500H14.500V13.500H1.500z" fill="#fff" stroke="#5068a8" /><path d="M1 3H15" stroke="#2a50c0" strokeWidth="3" /><path d="M4 6H7V8.500H4zM9 6H12V8.500H9zM4 10H7V12.500H4zM9 10H12V12.500H9z" fill="#e05a3a" /></> },
    caretCell,
    { label: "显示样式", width: "w-6", icon: <><path d="M1 8L3 1.500L10 5L12 10z" fill="#8a9090" stroke="#444" /><path d="M1 9L8 12L15 10V12L9 15L1 12z" fill="#6c7272" stroke="#444" /></> },
    caretCell,
    { label: "定向视图", width: "w-[26px]", icon: <><path d="M1 4L8 1.500L15 4L9 6.500z" fill="#bcd0fa" stroke="#4a62b0" /><path d="M1 4L9 6.500V15L1 12z" fill="#8ea8ee" stroke="#4a62b0" /><path d="M9 6.500L15 4V11.500L9 15z" fill="#5472d0" stroke="#4a62b0" /></> },
    caretCell,
    { label: "截面", width: "w-6", icon: <><path d="M0 2L5 5L0 8z" fill="#1ca02c" /><path d="M0 8L5 11L0 14z" fill="#e02020" /><path d="M5 8L10 2.500L15.500 8L10 13.500z" fill="#d5e2f2" stroke="#58688c" /><circle cx="10" cy="8" r="2" fill="#9fb4d4" stroke="#58688c" /></> },
    caretCell,
]

function ToolCell({ tool }: { tool: Tool }) {
    if (tool.caret) {
        return <Caret className={tool.width} />
    }
    return (
        <span className={clsx("flex shrink-0 justify-center", tool.width)}>
            <button
                type="button"
                aria-label={tool.label}
                className={clsx(
                    "flex h-[23px] w-[23px] items-center justify-center",
                    tool.on && "border border-[#a9d3dd] bg-[#cde5ea]"
                )}
            >
                <Ico>{tool.icon}</Ico>
            </button>
        </span>
    )
}

function Combo({ id, label, value, className }: { id: string; label: string; value: string; className: string }) {
    return (
        <div className={clsx("relative h-5 shrink-0", className)}>
            <label htmlFor={id} className="sr-only">{label}</label>
            <select
                id={id}
                className="block h-5 w-full appearance-none border border-[#a6a6a6] bg-white px-0.5 py-0 font-['Noto_Sans_CJK_SC',sans-serif] outline-none"
            >
                <option>{value}</option>
            </select>
            <svg width="8" height="4" viewBox="0 0 8 4" className="pointer-events-none absolute right-[5px] top-[9px]" aria-hidden="true">
                <path d="M0 0H8L4 4z" fill="#111" />
            </svg>
        </div>
    )
}

function SelectionBar() {
    return (
        <div className="flex h-8 shrink-0 items-center border-b border-[#868f94] bg-white text-[11px] text-[#111]">
            <button type="button" className="ml-0.5 flex w-[50px] shrink-0 items-center justify-between leading-4">
                <span>菜单(<u>M</u>)</span>
                <Caret className="w-1.5" />
            </button>
            <Sep className="ml-1.5 h-6" />
            <Combo id="filter" label="选择过滤器" value="无选择过滤器" className="ml-3 w-[133px]" />
            <Combo id="scope" label="选择范围" value="整个装配" className="ml-[9px] w-[140px]" />
            <div className="ml-1 flex">
                {snapTools.map((tool, i) => <ToolCell key={i} tool={tool} />)}
            </div>
            <Sep className="ml-[5px] h-6" />
            <div className="ml-[7px] flex">
                {viewTools.map((tool, i) => <ToolCell key={i} tool={tool} />)}
            </div>
            <Sep className="ml-[7px] h-6" />
            <Caret className="ml-[29px] w-3" />
            <Sep className="ml-[3px] h-6" />
        </div>
    )
}

/* ---------- part navigator ---------- */

const check = <path d="M2 9L5 8L7 11C8 7 11 4 14 3C11 6 9 10 7.500 14H6z" fill="#17c42c" stroke="#119a22" strokeWidth=".8" />

const folder = (
    <>
        <path d="M.5 14V4.500L2 3H5.500L7 4.500H13V7" fill="#fbe6a4" stroke="#8a5c14" />
        <path d="M.5 14.500L4.500 7.500H15.500L12.500 14.500z" fill="#f1b82c" stroke="#8a5c14" />
    </>
)

const nodeIcons = {
    views: (
        <>
            <path d="M1.500 4L7 .8L13 4V11L7 14L1.500 11z" stroke="#1c9a5c" strokeWidth="1.300" />
            <path d="M1.500 4L7 7L13 4M7 7V14M7 1V7M1.500 11L7 7L13 11" stroke="#1c9a5c" />
            <path d="M8 15.500L15 11" stroke="#f0582c" strokeWidth="2" />
        </>
    ),
    camera: (
        <>
            <path d="M1.500 5L12 1.500V11L1.500 15z" fill="#fff" stroke="#e02a1c" strokeWidth="1.500" />
            <circle cx="8" cy="7" r="3" fill="#6a8cd8" stroke="#2c2c6c" />
            <path d="M10.500 7H14.500V12.500H10.500z" fill="#eee" stroke="#222" />
            <path d="M4 8L12 5" stroke="#222" />
        </>
    ),
    drawing: (
        <g stroke="#4a5c9c">
            <path d="M3.500 .5H15.500V11H3.500z" fill="#8ea0d4" />
            <path d="M2 3H14V13H2z" fill="#b6c4ea" />
            <path d="M.5 5.500H12.500V15H.5z" fill="#e2eafa" />
            <path d="M7 15V11.500H12.500M9.500 11.500V15M7 13H12.500" stroke="#7a8ab8" />
        </g>
    ),
    expressions: (
        <>
            {folder}
            <path d="M8 1H15M8 3.500H15" stroke="#1a1a7c" strokeWidth="1.200" />
        </>
    ),
    folder,
    csys: (
        <>
            <path d="M2 5V12L7 14.500L12 11M2 5L12 11M2 12L12 5M7 2V14" stroke="#444" />
            <path d="M1.500 0V4" stroke="#2a2ae0" />
            <path d="M9 7L15 4" stroke="#1ca02c" strokeWidth="1.500" />
            <path d="M8 12L13 15.500" stroke="#c8283c" strokeWidth="1.500" />
        </>
    ),
}

interface TreeNode {
    label: string
    icon: ReactNode
    toggle?: "+" | "-"
    checked?: boolean
    first?: boolean
}

const nodes: TreeNode[] = [
    { label: "模型视图", icon: nodeIcons.views, toggle: "+", first: true },
    { label: "摄像机", icon: nodeIcons.camera, toggle: "+", checked: true },
    { label: "图纸", icon: nodeIcons.drawing, toggle: "+", checked: true },
    { label: "用户表达式", icon: nodeIcons.expressions },
    { label: "模型历史记录", icon: nodeIcons.folder, toggle: "-" },
]

const blankRows = Array.from({ length: 20 }, (_, i) => i)

function Branch({ node }: { node: TreeNode }) {
    const last = node.toggle === "-"
    return (
        <svg width="19" height="20" viewBox="0 0 19 20" className="shrink-0" fill="none" aria-hidden="true">
            <path
                d={`M9.500 ${node.first ? 10 : 0}V${last ? 10 : 20}M9.500 10.500H18`}
                stroke="#999"
                strokeDasharray="1 1"
            />
            {node.toggle && (
                <>
                    <path d="M5.500 6.500H13.500V14.500H5.500z" fill="#fff" stroke="#ccc" />
                    <path d={node.toggle === "+" ? "M7 10.500H12M9.500 8V13" : "M7 10.500H12"} stroke="#111" />
                </>
            )}
        </svg>
    )
}

const cell = "h-5 border-b border-r border-[#e9e9e9] p-0"

function Navigator() {
    return (
        <aside className="flex w-[355px] shrink-0 flex-col overflow-hidden bg-white text-[12px] text-[#111]">
            <div className="flex h-7 shrink-0 items-center justify-between pl-2.5 pr-4 pt-0.5">
                <h2>部件导航器</h2>
                <button type="button" aria-label="还原" className="h-[11px] w-3 border border-t-2 border-black" />
            </div>
            <div className="ml-1.5 mr-[9px] flex-1 overflow-hidden border border-b-0 border-[#d9d9d9] p-px pb-0">
                <table className="w-full table-fixed border-separate border-spacing-0 leading-4">
                    <colgroup>
                        <col className="w-[200px]" />
                        <col className="w-[37px]" />
                        <col />
                    </colgroup>
                    <thead className="bg-[#efefef] text-left">
                        <tr>
                            <th className="h-[21px] border-b border-r border-[#d0d0d0] p-0 pl-1.5 pt-px font-normal">
                                <span className="flex items-center gap-[18px]">
                                    名称
                                    <svg width="10" height="5" viewBox="0 0 10 5" aria-hidden="true"><path d="M5 0L10 5H0z" fill="#111" /></svg>
                                </span>
                            </th>
                            <th className="border-b border-r border-[#d0d0d0] p-0 pl-1.5 pt-px font-normal">最新</th>
                            <th className="border-b border-[#d0d0d0] p-0 pl-1.5 pt-px font-normal">附注</th>
                        </tr>
                    </thead>
                    <tbody>
                        {nodes.map(node => (
                            <tr key={node.label} className="even:bg-[#f9f9f9]">
                                <td className={cell}>
                                    <div className="flex h-[19px] items-center overflow-hidden">
                                        <Branch node={node} />
                                        {node.checked && <Ico>{check}</Ico>}
                                        <Ico>{node.icon}</Ico>
                                        <span className="pl-[3px]">{node.label}</span>
                                    </div>
                                </td>
                                <td className={cell} />
                                <td className="border-b border-[#e9e9e9]" />
                            </tr>
                        ))}
                        <tr className="even:bg-[#f9f9f9]">
                            <td className={cell}>
                                <div className="flex h-[19px] items-center">
                                    <svg width="40" height="20" viewBox="0 0 40 20" className="shrink-0" fill="none" aria-hidden="true">
                                        <path d="M28.500 0V10.500H38" stroke="#999" strokeDasharray="1 1" />
                                    </svg>
                                    <span className="relative flex h-3 w-3">
                                        <input
                                            id="csys"
                                            type="checkbox"
                                            defaultChecked
                                            className="h-3 w-3 appearance-none border border-black bg-white"
                                        />
                                        <svg width="12" height="12" viewBox="1 1 14 14" fill="none" className="pointer-events-none absolute inset-0" aria-hidden="true">{check}</svg>
                                    </span>
                                    <span className="ml-0.5"><Ico>{nodeIcons.csys}</Ico></span>
                                    <label htmlFor="csys" className="pl-[3px] font-bold">基准坐标系 (0)</label>
                                </div>
                            </td>
                            <td className={cell}>
                                <div className="pl-1"><Ico>{check}</Ico></div>
                            </td>
                            <td className="border-b border-[#e9e9e9]" />
                        </tr>
                        {blankRows.map(i => (
                            <tr key={i} className="even:bg-[#f9f9f9]">
                                <td className={cell} />
                                <td className={cell} />
                                <td className="border-b border-[#e9e9e9]" />
                            </tr>
                        ))}
                    </tbody>
                </table>
            </div>
        </aside>
    )
}

/* ---------- resource strip on the far left ---------- */

function ResourceStrip() {
    return (
        <div className="flex w-1 shrink-0 flex-col overflow-hidden bg-white">
            <div className="h-[125px] border-b border-r border-[#9c9c9c] bg-[#dcdcdc] pt-[62px]">
                <div className="h-px w-0.5 bg-black" />
            </div>
            <div className="h-11 shrink-0" />
            <div className="flex-1 border-r border-t border-[#9c9c9c] bg-[#dcdcdc] pt-2.5">
                <div className="h-4 w-px bg-[#2a5cd0]" />
                <div className="mt-11 h-2 w-0.5 bg-[#2a5cd0]" />
                <div className="mt-[99px] h-2 w-px bg-[#555]" />
            </div>
        </div>
    )
}

/* ---------- graphics area ---------- */

function HomePageDialog() {
    return (
        <div
            role="dialog"
            aria-labelledby="home-title"
            className="absolute bottom-0 left-[383px] right-1.5 top-[58px] border border-b-0 border-[#55585a] bg-white shadow-[0_0_10px_rgba(0,0,0,0.35)]"
        >
            <div className="flex h-[29px] items-center pl-2 text-[12px] text-black">
                <Ico>
                    <circle cx="8" cy="8.500" r="6.500" fill="#1f8fe0" />
                    <path d="M8 15C3 15 1 11 2 7C4 12 9 13 14 9C14 13 11 15 8 15z" fill="#173a86" />
                    <path d="M5 7L8 12L12 5L9 8z" fill="#9ff0fb" />
                    <path d="M2 14C8 15 14 11 15.500 4" stroke="#e8a62c" strokeWidth="1.500" />
                    <path d="M2 1L8.500 1.500L9 8L7 5.500L4 5z" fill="#d8173a" />
                </Ico>
                <h2 id="home-title" className="ml-[5px] flex-1 leading-4">HomePage</h2>
                <button type="button" aria-label="最小化" className="flex w-[46px] justify-center">
                    <Ico box={11}><path d="M0 5.500H11" stroke="#000" /></Ico>
                </button>
                <button type="button" aria-label="最大化" className="flex w-[46px] justify-center">
                    <Ico box={11}><path d="M.5 .5H10.500V10.500H.5z" stroke="#000" /></Ico>
                </button>
                <button type="button" aria-label="关闭" className="flex w-[46px] justify-center">
                    <Ico box={11}><path d="M.5 .5L10.500 10.500M10.500 .5L.5 10.500" stroke="#000" /></Ico>
                </button>
            </div>
        </div>
    )
}

function GraphicsArea() {
    return (
        <main className="relative flex min-w-0 flex-1 flex-col overflow-hidden border-l border-[#868f94] bg-white">
            <div className="flex h-[23px] shrink-0 border-b-2 border-[#559fb7]">
                <div className="flex items-center bg-[#559fb7] pl-1.5 pr-1.5 text-[12px] text-white">
                    <Ico>
                        <path d="M2 4L6 1L10 3V8L15 9V12L9 15L2 12z" fill="#1a50d8" stroke="#123a9c" />
                        <path d="M2 4L6 1.500L10 3L6 5.500zM6 10L10 8L15 9L10 11.500z" fill="#9cc8ff" />
                    </Ico>
                    <a href="#model2" className="ml-[5px] leading-4">_model2.prt</a>
                    <span className="ml-1.5">
                        <Ico box={12} size={11}>
                            <path d="M8 11H1.500V1.500H6.500L9.500 4V5" stroke="#fff" strokeWidth="1.500" />
                            <path d="M5 8H9M8 5L11 8L8 11" stroke="#fff" strokeWidth="1.500" />
                        </Ico>
                    </span>
                    <button type="button" aria-label="关闭部件" className="ml-1">
                        <Ico box={12} size={11}><path d="M2 2L10 10M10 2L2 10" stroke="#fff" strokeWidth="2.200" /></Ico>
                    </button>
                </div>
            </div>
            <div className="ml-px flex-1 bg-linear-to-b from-[#b1b2b4] to-[#d9dadc]" />
            <HomePageDialog />
        </main>
    )
}

export default function App() {
    return (
        <div className="flex h-screen flex-col overflow-hidden bg-white font-['Noto_Sans','Noto_Sans_CJK_SC',sans-serif]">
            <QuickBar />
            <TabRow />
            <Ribbon />
            <SelectionBar />
            <div className="flex min-h-0 flex-1">
                <ResourceStrip />
                <Navigator />
                <GraphicsArea />
            </div>
        </div>
    )
}
